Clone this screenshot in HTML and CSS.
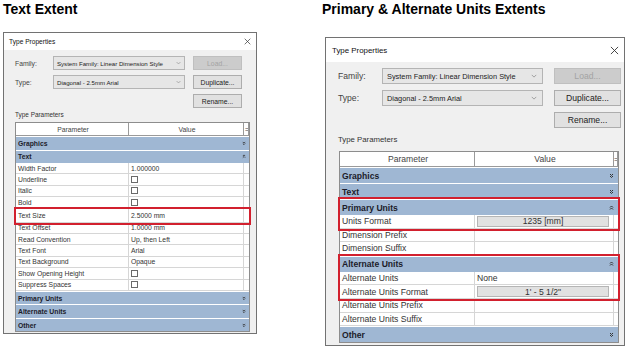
FILE: index.html
```html
<!DOCTYPE html>
<html>
<head>
    <meta charset="utf-8" />
    <title>Type Properties Extents</title>
    <link rel="stylesheet" href="styles.css">
</head>
<body>
<div class="page">

    <section class="panel panel-left">
        <h1>Text Extent</h1>
        <div class="dlg dlg-s">
            <div class="dlg-title">
                <span>Type Properties</span>
                <svg class="close" viewBox="0 0 10 10"><path d="M1 1L9 9M9 1L1 9" /></svg>
            </div>
            <div class="dlg-form">
                <span class="lbl">Family:</span>
                <div class="combo"><span>System Family: Linear Dimension Style</span><svg class="chev" viewBox="0 0 8 5"><path d="M1 1L4 4L7 1" /></svg></div>
                <div class="btn disabled">Load...</div>
                <span class="lbl">Type:</span>
                <div class="combo"><span>Diagonal - 2.5mm Arial</span><svg class="chev" viewBox="0 0 8 5"><path d="M1 1L4 4L7 1" /></svg></div>
                <div class="btn">Duplicate...</div>
                <span></span>
                <span></span>
                <div class="btn">Rename...</div>
            </div>
            <div class="sub">Type Parameters</div>
            <div class="grid">
                <div class="row head">
                    <div>Parameter</div>
                    <div>Value</div>
                    <div>=</div>
                </div>
                <div class="grp">Graphics<svg class="fold" viewBox="0 0 5 6"><path d="M1 1L2.5 2.5L4 1M1 3L2.5 4.5L4 3" /></svg></div>
                <div class="grp">Text<svg class="fold" viewBox="0 0 5 6"><path d="M1 2.5L2.5 1L4 2.5M1 4.5L2.5 3L4 4.5" /></svg></div>
                <div class="row"><div>Width Factor</div><div>1.000000</div><div></div></div>
                <div class="row"><div>Underline</div><div><span class="chk"></span></div><div></div></div>
                <div class="row"><div>Italic</div><div><span class="chk"></span></div><div></div></div>
                <div class="row"><div>Bold</div><div><span class="chk"></span></div><div></div></div>
                <div class="row hl tall"><div>Text Size</div><div>2.5000 mm</div><div></div></div>
                <div class="row"><div>Text Offset</div><div>1.0000 mm</div><div></div></div>
                <div class="row"><div>Read Convention</div><div>Up, then Left</div><div></div></div>
                <div class="row"><div>Text Font</div><div>Arial</div><div></div></div>
                <div class="row"><div>Text Background</div><div>Opaque</div><div></div></div>
                <div class="row"><div>Show Opening Height</div><div><span class="chk"></span></div><div></div></div>
                <div class="row"><div>Suppress Spaces</div><div><span class="chk"></span></div><div></div></div>
                <div class="grp">Primary Units<svg class="fold" viewBox="0 0 5 6"><path d="M1 1L2.5 2.5L4 1M1 3L2.5 4.5L4 3" /></svg></div>
                <div class="grp">Alternate Units<svg class="fold" viewBox="0 0 5 6"><path d="M1 1L2.5 2.5L4 1M1 3L2.5 4.5L4 3" /></svg></div>
                <div class="grp">Other<svg class="fold" viewBox="0 0 5 6"><path d="M1 1L2.5 2.5L4 1M1 3L2.5 4.5L4 3" /></svg></div>
            </div>
        </div>
    </section>

    <section class="panel panel-right">
        <h1>Primary &amp; Alternate Units Extents</h1>
        <div class="dlg dlg-l">
            <div class="dlg-title">
                <span>Type Properties</span>
                <svg class="close" viewBox="0 0 10 10"><path d="M1 1L9 9M9 1L1 9" /></svg>
            </div>
            <div class="dlg-form">
                <span class="lbl">Family:</span>
                <div class="combo"><span>System Family: Linear Dimension Style</span><svg class="chev" viewBox="0 0 8 5"><path d="M1 1L4 4L7 1" /></svg></div>
                <div class="btn disabled">Load...</div>
                <span class="lbl">Type:</span>
                <div class="combo"><span>Diagonal - 2.5mm Arial</span><svg class="chev" viewBox="0 0 8 5"><path d="M1 1L4 4L7 1" /></svg></div>
                <div class="btn">Duplicate...</div>
                <span></span>
                <span></span>
                <div class="btn">Rename...</div>
            </div>
            <div class="sub">Type Parameters</div>
            <div class="grid">
                <div class="row head">
                    <div>Parameter</div>
                    <div>Value</div>
                    <div>=</div>
                </div>
                <div class="grp">Graphics<svg class="fold" viewBox="0 0 5 6"><path d="M1 1L2.5 2.5L4 1M1 3L2.5 4.5L4 3" /></svg></div>
                <div class="grp">Text<svg class="fold" viewBox="0 0 5 6"><path d="M1 1L2.5 2.5L4 1M1 3L2.5 4.5L4 3" /></svg></div>
                <div class="hl">
                    <div class="grp">Primary Units<svg class="fold" viewBox="0 0 5 6"><path d="M1 2.5L2.5 1L4 2.5M1 4.5L2.5 3L4 4.5" /></svg></div>
                    <div class="row"><div>Units Format</div><div><span class="vbtn">1235 [mm]</span></div><div></div></div>
                </div>
                <div class="row"><div>Dimension Prefix</div><div></div><div></div></div>
                <div class="row"><div>Dimension Suffix</div><div></div><div></div></div>
                <div class="hl">
                    <div class="grp">Alternate Units<svg class="fold" viewBox="0 0 5 6"><path d="M1 2.5L2.5 1L4 2.5M1 4.5L2.5 3L4 4.5" /></svg></div>
                    <div class="row"><div>Alternate Units</div><div>None</div><div></div></div>
                    <div class="row"><div>Alternate Units Format</div><div><span class="vbtn">1' - 5 1/2"</span></div><div></div></div>
                </div>
                <div class="row"><div>Alternate Units Prefix</div><div></div><div></div></div>
                <div class="row"><div>Alternate Units Suffix</div><div></div><div></div></div>
                <div class="grp">Other<svg class="fold" viewBox="0 0 5 6"><path d="M1 1L2.5 2.5L4 1M1 3L2.5 4.5L4 3" /></svg></div>
            </div>
        </div>
    </section>

</div>
</body>
</html>
```

FILE: styles.css
```css
body {
    margin: 0;
    font-family: "Liberation Sans", Arial, sans-serif;
    background: #fff;
    color: #000;
}

.page {
    display: flex;
    width: 632px;
    height: 353px;
    overflow: hidden;
}

.panel-left {
    width: 319px;
    padding-left: 3px;
}

.panel-right {
    flex: 1;
}

h1 {
    margin: 0;
    font-size: 14px;
    line-height: 18px;
    font-weight: bold;
}

/* dialog shell */
.dlg {
    box-sizing: border-box;
    border: 1px solid #727272;
    background: #f0f0f0;
    color: #333;
    overflow: hidden;
}

.dlg-title {
    display: flex;
    justify-content: space-between;
    align-items: center;
    background: #fff;
    color: #111;
}

.close path {
    stroke: #333;
    stroke-width: 1;
    fill: none;
}

.dlg-form {
    display: grid;
    align-items: stretch;
}

.lbl {
    align-self: center;
    color: #444;
}

.combo {
    display: flex;
    align-items: center;
    justify-content: space-between;
    background: #e6e6e6;
    border: 1px solid #b4b4b4;
    box-sizing: border-box;
    color: #222;
    white-space: nowrap;
    overflow: hidden;
}

.chev {
    flex: none;
}

.chev path {
    stroke: #8a8a8a;
    stroke-width: 1;
    fill: none;
}

.btn {
    display: flex;
    align-items: center;
    justify-content: center;
    background: #e1e1e1;
    border: 1px solid #adadad;
    box-sizing: border-box;
    color: #222;
    white-space: nowrap;
}

.btn.disabled {
    background: #cccccc;
    border-color: #bfbfbf;
    color: #a3a3a3;
}

/* property grid */
.grid {
    border: 1px solid #8d8d8d;
    background: #fff;
}

.row {
    display: grid;
    box-sizing: border-box;
}

.row > div {
    display: flex;
    align-items: center;
    border-right: 1px solid #d6d6d6;
    border-bottom: 1px solid #d6d6d6;
    white-space: nowrap;
    overflow: hidden;
}

.row > div:last-child {
    border-right: none;
}

.row.head > div {
    justify-content: center;
    border-right: 1px solid #9a9a9a;
    border-bottom: 1px solid #9a9a9a;
    color: #444;
}

.grp {
    display: flex;
    align-items: center;
    justify-content: space-between;
    box-sizing: border-box;
    background: #9fb7d3;
    border-top: 1px solid #fff;
    font-weight: bold;
    color: #1c1c2a;
}

.fold path {
    stroke: #333;
    stroke-width: 1;
    fill: none;
}

.chk {
    display: inline-block;
    background: #fff;
    border: 1px solid #6a6a6a;
    box-sizing: border-box;
}

.vbtn {
    flex: 1;
    display: flex;
    align-items: center;
    justify-content: center;
    align-self: stretch;
    background: #e1e1e1;
    border: 1px solid #b5b5b5;
    margin: 1px 4px 1px 0;
}

.hl {
    outline: 2px solid #d2202e;
    position: relative;
    z-index: 1;
}

/* small dialog (left) */
.dlg-s {
    width: 254px;
    height: 302px;
    margin-top: 14px;
    font-size: 6.8px;
}

.dlg-s .dlg-title {
    height: 17px;
    padding: 0 5px 0 5px;
    font-size: 6.6px;
}

.dlg-s .close {
    width: 7px;
    height: 7px;
}

.dlg-s .dlg-form {
    grid-template-columns: 30px 132px 49px;
    grid-auto-rows: 14px;
    column-gap: 8px;
    row-gap: 5px;
    padding: 6px 0 0 11px;
}

.dlg-s .combo {
    padding: 0 3px 0 3px;
    font-size: 6.1px;
}

.dlg-s .chev {
    width: 5px;
    height: 4px;
}

.dlg-s .sub {
    margin: 3px 0 0 11px;
    line-height: 8px;
    font-size: 6.4px;
}

.dlg-s .grid {
    margin: 3px 6px 0 11px;
}

.dlg-s .row {
    grid-template-columns: 113px 115px 1fr;
    height: 11.4px;
}

.dlg-s .row.head {
    height: 13px;
}

.dlg-s .row > div {
    padding-left: 2px;
}

.dlg-s .grp {
    height: 13.5px;
    padding: 0 3px 0 2px;
}

.dlg-s .fold {
    width: 4px;
    height: 5px;
}

.dlg-s .chk {
    width: 7px;
    height: 7px;
}

.dlg-s .row.tall {
    height: 14px;
}

/* large dialog (right) */
.dlg-l {
    width: 300px;
    height: 309px;
    margin: 19px 0 0 3px;
    font-size: 8.6px;
}

.dlg-l .dlg-title {
    height: 24px;
    padding: 0 5px 0 6px;
    font-size: 7.9px;
}

.dlg-l .close {
    width: 9px;
    height: 9px;
}

.dlg-l .dlg-form {
    grid-template-columns: 33px 161px 67px;
    grid-auto-rows: 16px;
    column-gap: 11px;
    row-gap: 6px;
    padding: 6px 0 0 12px;
}

.dlg-l .combo {
    padding: 0 5px 0 4px;
    font-size: 7.4px;
}

.dlg-l .chev {
    width: 6px;
    height: 4px;
}

.dlg-l .sub {
    margin: 7px 0 0 12px;
    line-height: 10px;
    font-size: 7.8px;
}

.dlg-l .grid {
    margin: 6px 5px 0 13px;
}

.dlg-l .row {
    grid-template-columns: 135px 139px 1fr;
    height: 13.6px;
}

.dlg-l .row.head {
    height: 15px;
}

.dlg-l .row > div {
    padding-left: 2px;
}

.dlg-l .grp {
    height: 16px;
    padding: 0 4px 0 2px;
}

.dlg-l .fold {
    width: 5px;
    height: 6px;
}

.dlg-l .hl {
    outline-offset: 0;
}
```
